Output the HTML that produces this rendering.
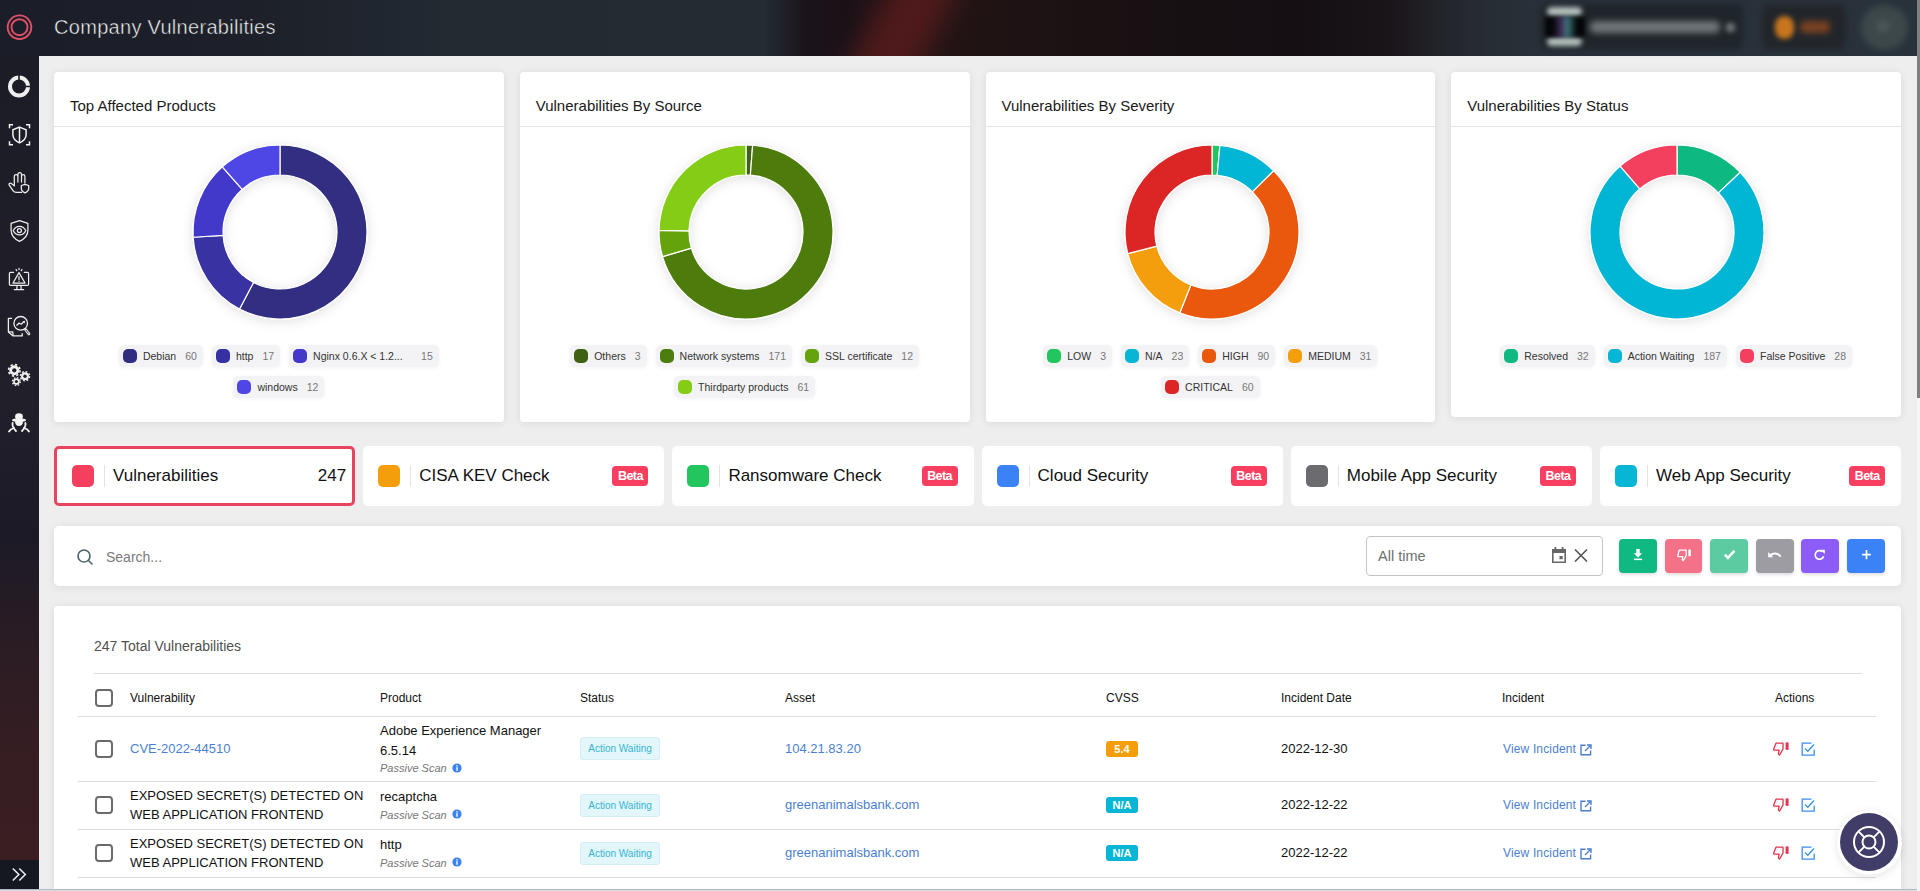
<!DOCTYPE html><html><head><meta charset="utf-8"><title>Company Vulnerabilities</title><style>
*{margin:0;padding:0;box-sizing:border-box}
html,body{width:1920px;height:891px;overflow:hidden;background:#efeeef;font-family:"Liberation Sans",sans-serif;color:#111}
.abs{position:absolute}
#hdr{position:absolute;left:0;top:0;width:1917px;height:56px;overflow:hidden;
 background:linear-gradient(90deg,#1b1d29 0px,#1d2029 250px,#222a32 450px,#232b33 765px,#1b141a 805px,#1a1117 845px,#241315 900px,#1f1314 1000px,#181013 1150px,#150f13 1300px,#1a1519 1390px,#22242a 1440px,#272d34 1490px,#29313a 1550px,#29323a 1920px)}
#streak{position:absolute;left:872px;top:-40px;width:62px;height:140px;background:#4e1a1b;transform:rotate(28deg);filter:blur(13px)}
#sb{position:absolute;left:0;top:56px;width:39px;height:835px;
 background:linear-gradient(180deg,#1c1c27 0px,#201f2a 350px,#1c1a26 480px,#2b1c24 590px,#361e22 700px,#3a1e22 804px)}
#sbb{position:absolute;left:0;top:860px;width:39px;height:29px;background:#161821}
.card{position:absolute;background:#fff;border-radius:4px;box-shadow:0 1px 8px rgba(0,0,0,.085)}
.ctitle{position:absolute;left:16px;top:25px;font-size:15px;color:#1a1a1a;white-space:nowrap}
.cdiv{position:absolute;left:0;right:0;top:54px;height:1px;background:#e5e5e5}
.chip{position:absolute;height:22px;background:#f3f3f5;border-radius:5px;box-shadow:0 1px 3px rgba(0,0,0,.05);font-size:12px;color:#333;white-space:nowrap}
.chip i{position:absolute;left:4px;top:4px;width:14px;height:14px;border-radius:4px}
.chip b{position:absolute;top:4px;font-weight:normal;line-height:14px}
.chip s{position:absolute;top:4px;text-decoration:none;color:#777;line-height:14px}
.tab{position:absolute;top:446px;width:301.2px;height:60px;background:#fff;border-radius:5px}
.tab.act{border:3px solid #e8445f}
.tab i{position:absolute;left:15px;top:19px;width:22px;height:22px;border-radius:5px}
.tab em{position:absolute;left:47px;top:19px;width:1px;height:22px;background:#e3e3e3}
.tab span{position:absolute;left:56px;top:19px;font-size:17px;line-height:22px;color:#111;white-space:nowrap}
.beta{position:absolute;right:16px;top:20px;width:36px;height:20px;border-radius:4px;background:#f83f60;color:#fff;font-size:12.5px;font-weight:bold;letter-spacing:-0.55px;line-height:20px;text-align:center}
.btn{position:absolute;top:539px;width:37.8px;height:34px;border-radius:4px;box-shadow:0 2px 3px rgba(0,0,0,.12)}
.btn svg{position:absolute;left:0;top:0}
.th{position:absolute;top:691px;font-size:12px;line-height:15px;color:#111;white-space:nowrap}
.hl{position:absolute;height:1px;background:#dedede}
.cb{position:absolute;left:95px;width:18px;height:18px;border:2px solid #6b6b6b;border-radius:4px}
.td{position:absolute;font-size:13px;line-height:19px;color:#111;white-space:nowrap}
.lnk{color:#4b7fcf}
.ps{position:absolute;font-size:11px;font-style:italic;color:#777;white-space:nowrap;line-height:13px}
.aw{position:absolute;left:580px;width:80px;height:23px;border-radius:3px;background:#e3f6fa;border:1px solid #d3eef4;color:#35b5d2;font-size:10px;line-height:21px;text-align:center;white-space:nowrap}
.cv{position:absolute;left:1106px;width:32px;height:16px;border-radius:3px;color:#fff;font-size:11px;line-height:16px;text-align:center;font-weight:bold}

.lrow{position:absolute;height:22px;display:flex;justify-content:center;gap:9px}
.lc{display:flex;align-items:center;height:22px;padding:0 6px 0 4px;background:#f3f3f5;border-radius:5px;box-shadow:0 1px 4px rgba(0,0,0,.05);font-size:10.5px;color:#333;white-space:nowrap}
.lc i{width:14px;height:14px;border-radius:5px;margin-right:6px;flex:none}
.lc b{font-weight:normal}
.lc s{text-decoration:none;color:#777;margin-left:9px}
</style></head><body>
<div id="hdr"><div id="streak"></div></div>
<svg class="abs" style="left:0;top:0" width="40" height="56"><circle cx="19.5" cy="27.2" r="11.8" fill="none" stroke="#de5065" stroke-width="1.9"/><circle cx="19.5" cy="27.2" r="8" fill="none" stroke="#de5065" stroke-width="1.9"/></svg>
<div class="abs" style="left:54px;top:15px;font-size:20px;line-height:24px;color:#fafafa;white-space:nowrap;letter-spacing:0.3px;-webkit-text-stroke:0.5px #1c1f2a">Company Vulnerabilities</div>
<div class="abs" style="left:1540px;top:3px;width:203px;height:47px;border-radius:8px;background:#1f262b;filter:blur(3px)"></div>
<div class="abs" style="left:1547px;top:7px;width:35px;height:9px;border-radius:5px;background:#b4c0bc;filter:blur(2.5px)"></div>
<div class="abs" style="left:1547px;top:37px;width:35px;height:9px;border-radius:5px;background:#b4c0bc;filter:blur(2.5px)"></div>
<div class="abs" style="left:1545px;top:17px;width:40px;height:20px;background:linear-gradient(90deg,#050508 20%,#4a3a6a 45%,#3a7a7a 55%,#050508 80%);filter:blur(2px)"></div>
<div class="abs" style="left:1590px;top:21px;width:130px;height:12px;border-radius:5px;background:#6e7478;filter:blur(3px)"></div>
<div class="abs" style="left:1726px;top:23px;width:9px;height:9px;border-radius:3px;background:#6e7478;filter:blur(2.5px)"></div>
<div class="abs" style="left:1762px;top:4px;width:84px;height:46px;border-radius:8px;background:#22262b;filter:blur(3px)"></div>
<div class="abs" style="left:1775px;top:16px;width:19px;height:23px;border-radius:9px;background:#c8761e;filter:blur(2.5px)"></div>
<div class="abs" style="left:1800px;top:21px;width:30px;height:12px;border-radius:5px;background:#7a4222;filter:blur(3px)"></div>
<div class="abs" style="left:1861px;top:5px;width:47px;height:45px;border-radius:50%;background:#3d484b;filter:blur(3px)"></div>
<div class="abs" style="left:1876px;top:20px;width:14px;height:12px;border-radius:50%;background:#4c5759;filter:blur(3px)"></div>
<div id="sb"></div><div id="sbb"></div>
<svg class="abs" style="left:0;top:0" width="39" height="891"><g transform="translate(19,86.5)"><circle r="9" fill="none" stroke="#eee" stroke-width="4"/><path d="M0,-12 V-6 M6,0 H12" stroke="#1c1c27" stroke-width="1.6"/></g><g transform="translate(19.5,134.7)" fill="none" stroke="#f2f2f2" stroke-width="1.5"><path d="M-10,-6.5 V-10 H-6.5 M6.5,-10 H10 V-6.5 M10,6.5 V10 H6.5 M-6.5,10 H-10 V6.5"/><path d="M0,-7.6 L6.6,-5 V0 C6.6,4 3.5,6.5 0,8.2 C-3.5,6.5 -6.6,4 -6.6,0 V-5 Z"/><path d="M0,-7.6 V8.2"/></g><g fill="none" stroke="#eee" stroke-width="1.25" stroke-linejoin="round" stroke-linecap="round"><path d="M14.3,185.6 V176.3 A1.8,1.8 0 0,1 17.9,176.3 V182 V174.4 A1.8,1.8 0 0,1 21.5,174.4 V182 V176.4 A1.7,1.7 0 0,1 24.9,176.4 V183"/><path d="M14.3,185.8 L11.3,183.6 A1.3,1.3 0 0,0 9.4,185.4 L13,190.6 C13.8,191.8 15,192.4 16.5,192.4 H21.6"/><path d="M21.3,185.5 L25,184.3 L28.7,185.5 V188.2 C28.7,190.6 27,192 25,192.8 C23,192 21.3,190.6 21.3,188.2 Z"/></g><g fill="none" stroke="#eee" stroke-width="1.25" stroke-linejoin="round"><path d="M19.5,220.6 L27.9,223.4 V230.2 C27.9,235.4 24,239.2 19.5,241.4 C15,239.2 11.1,235.4 11.1,230.2 V223.4 Z"/><path d="M13.2,230.6 C15.8,224.8 23.2,224.8 25.8,230.6 C23.2,236.4 15.8,236.4 13.2,230.6 Z"/><circle cx="19.4" cy="230.6" r="2"/></g><g fill="none" stroke="#eee" stroke-width="1.25" stroke-linejoin="round" stroke-linecap="round"><path d="M13.6,272.3 H10.6 Q9.4,272.3 9.4,273.5 V284.2 Q9.4,285.4 10.6,285.4 H27.4 Q28.6,285.4 28.6,284.2 V273.5 Q28.6,272.3 27.4,272.3 H24.2"/><path d="M19,272.6 L25,283 H13 Z"/><path d="M19,276.6 V279.4 M19,281 V281.3"/><path d="M17.1,285.6 L16.8,289.4 M20.9,285.6 L21.2,289.4 M14.3,289.5 H23.7"/><path d="M16.1,269.6 L16.7,270.6 M19,268.4 V269.5 M21.9,269.6 L21.3,270.6"/></g><g fill="none" stroke="#eee" stroke-width="1.3" stroke-linejoin="round"><path d="M12.1,318.4 H8.4 V331.9 L13.1,335.9 H22.2 V333.2"/><path d="M8.4,331.9 H12.75 L13.1,335.9"/><circle cx="20.7" cy="323.3" r="6.8"/><path d="M16.5,325.6 L19.2,323.1 L21.2,324.2 L23.6,322"/></g><path d="M25.6,329.6 L28.9,333.9" stroke="#eee" stroke-width="2.8" stroke-linecap="round"/><path d="M26,330.2 L28.5,333.3" stroke="#1c1c27" stroke-width="0.9" stroke-linecap="round"/><path d="M22.4,321.2 L25.2,320.8 L24.6,323.6 Z" fill="#eee"/><g><circle cx="14.3" cy="370.3" r="5.0" fill="#eee"/><circle cx="14.3" cy="370.3" r="5.75" fill="none" stroke="#eee" stroke-width="1.7" stroke-dasharray="2.258 2.258"/><circle cx="14.3" cy="370.3" r="2.1" fill="#1c1b26"/><circle cx="25" cy="376.2" r="3.9" fill="#eee"/><circle cx="25" cy="376.2" r="4.55" fill="none" stroke="#eee" stroke-width="1.5000000000000002" stroke-dasharray="1.787 1.787"/><circle cx="25" cy="376.2" r="1.7" fill="#1c1b26"/><circle cx="16.4" cy="381.6" r="3.3" fill="#eee"/><circle cx="16.4" cy="381.6" r="3.9" fill="none" stroke="#eee" stroke-width="1.4000000000000001" stroke-dasharray="1.532 1.532"/><circle cx="16.4" cy="381.6" r="1.5" fill="#1c1b26"/></g><g fill="#f4f4f4"><ellipse cx="19" cy="416.5" rx="3.9" ry="3.2"/><ellipse cx="19" cy="420.2" rx="7" ry="1.9"/><path d="M15,421.5 H23 C23,424.5 21,426 19,426 C17,426 15,424.5 15,421.5 Z"/></g><g fill="none" stroke="#f4f4f4" stroke-width="1.8" stroke-linecap="round"><path d="M12.6,423 C12,426 13,428 16,431"/><path d="M25.4,423 C26,426 25,428 22,431"/><path d="M9,431.5 C10,429.5 12,428.5 14,428"/><path d="M29,431.5 C28,429.5 26,428.5 24,428"/></g><g transform="translate(19.8,874.5)" fill="none" stroke="#e8e8ee" stroke-width="1.6"><path d="M-7,-6 L-1,0 L-7,6 M-0.5,-6 L5.5,0 L-0.5,6"/></g></svg>
<div class="card" style="left:54px;top:72px;width:449.75px;height:350px"><div class="ctitle">Top Affected Products</div><div class="cdiv"></div></div>
<svg class="abs" style="left:170px;top:122px" width="220" height="220"><defs><filter id="sh54" x="-20%" y="-20%" width="140%" height="140%"><feDropShadow dx="0" dy="2" stdDeviation="6" flood-color="#000" flood-opacity="0.12"/></filter></defs><g filter="url(#sh54)"><path d="M110.00,23.00 A87,87 0 1 1 69.57,187.03 L83.51,160.47 A57,57 0 1 0 110.00,53.00 Z" fill="#312e81" stroke="#ffffff" stroke-width="1.2" stroke-linejoin="round"/>
<path d="M69.57,187.03 A87,87 0 0 1 23.16,115.25 L53.10,113.44 A57,57 0 0 0 83.51,160.47 Z" fill="#3730a3" stroke="#ffffff" stroke-width="1.2" stroke-linejoin="round"/>
<path d="M23.16,115.25 A87,87 0 0 1 52.31,44.88 L72.20,67.33 A57,57 0 0 0 53.10,113.44 Z" fill="#4338ca" stroke="#ffffff" stroke-width="1.2" stroke-linejoin="round"/>
<path d="M52.31,44.88 A87,87 0 0 1 110.00,23.00 L110.00,53.00 A57,57 0 0 0 72.20,67.33 Z" fill="#4f46e5" stroke="#ffffff" stroke-width="1.2" stroke-linejoin="round"/></g></svg>
<div class="lrow" style="left:54px;top:345px;width:449.75px"><div class="lc"><i style="background:#312e81"></i><b>Debian</b><s>60</s></div><div class="lc"><i style="background:#3730a3"></i><b>http</b><s>17</s></div><div class="lc"><i style="background:#4338ca"></i><b style="display:inline-block;width:94px">Nginx 0.6.X &lt; 1.2...</b><s style="margin-left:14px">15</s></div></div>
<div class="lrow" style="left:54px;top:376px;width:449.75px"><div class="lc"><i style="background:#4f46e5"></i><b>windows</b><s>12</s></div></div>
<div class="card" style="left:519.75px;top:72px;width:449.75px;height:350px"><div class="ctitle">Vulnerabilities By Source</div><div class="cdiv"></div></div>
<svg class="abs" style="left:635.75px;top:122px" width="220" height="220"><defs><filter id="sh519" x="-20%" y="-20%" width="140%" height="140%"><feDropShadow dx="0" dy="2" stdDeviation="6" flood-color="#000" flood-opacity="0.12"/></filter></defs><g filter="url(#sh519)"><path d="M110.00,23.00 A87,87 0 0 1 116.63,23.25 L114.35,53.17 A57,57 0 0 0 110.00,53.00 Z" fill="#3f6212" stroke="#ffffff" stroke-width="1.2" stroke-linejoin="round"/>
<path d="M116.63,23.25 A87,87 0 1 1 26.54,134.56 L55.32,126.09 A57,57 0 1 0 114.35,53.17 Z" fill="#4d7c0f" stroke="#ffffff" stroke-width="1.2" stroke-linejoin="round"/>
<path d="M26.54,134.56 A87,87 0 0 1 23.02,108.34 L53.01,108.91 A57,57 0 0 0 55.32,126.09 Z" fill="#65a30d" stroke="#ffffff" stroke-width="1.2" stroke-linejoin="round"/>
<path d="M23.02,108.34 A87,87 0 0 1 110.00,23.00 L110.00,53.00 A57,57 0 0 0 53.01,108.91 Z" fill="#84cc16" stroke="#ffffff" stroke-width="1.2" stroke-linejoin="round"/></g></svg>
<div class="lrow" style="left:519.75px;top:345px;width:449.75px"><div class="lc"><i style="background:#3f6212"></i><b>Others</b><s>3</s></div><div class="lc"><i style="background:#4d7c0f"></i><b>Network systems</b><s>171</s></div><div class="lc"><i style="background:#65a30d"></i><b>SSL certificate</b><s>12</s></div></div>
<div class="lrow" style="left:519.75px;top:376px;width:449.75px"><div class="lc"><i style="background:#84cc16"></i><b>Thirdparty products</b><s>61</s></div></div>
<div class="card" style="left:985.5px;top:72px;width:449.75px;height:350px"><div class="ctitle">Vulnerabilities By Severity</div><div class="cdiv"></div></div>
<svg class="abs" style="left:1101.5px;top:122px" width="220" height="220"><defs><filter id="sh985" x="-20%" y="-20%" width="140%" height="140%"><feDropShadow dx="0" dy="2" stdDeviation="6" flood-color="#000" flood-opacity="0.12"/></filter></defs><g filter="url(#sh985)"><path d="M110.00,23.00 A87,87 0 0 1 117.91,23.36 L115.18,53.24 A57,57 0 0 0 110.00,53.00 Z" fill="#22c55e" stroke="#ffffff" stroke-width="1.2" stroke-linejoin="round"/>
<path d="M117.91,23.36 A87,87 0 0 1 171.75,48.72 L150.46,69.85 A57,57 0 0 0 115.18,53.24 Z" fill="#06b6d4" stroke="#ffffff" stroke-width="1.2" stroke-linejoin="round"/>
<path d="M171.75,48.72 A87,87 0 0 1 77.78,190.81 L88.89,162.95 A57,57 0 0 0 150.46,69.85 Z" fill="#ea580c" stroke="#ffffff" stroke-width="1.2" stroke-linejoin="round"/>
<path d="M77.78,190.81 A87,87 0 0 1 25.71,131.56 L54.78,124.13 A57,57 0 0 0 88.89,162.95 Z" fill="#f59e0b" stroke="#ffffff" stroke-width="1.2" stroke-linejoin="round"/>
<path d="M25.71,131.56 A87,87 0 0 1 110.00,23.00 L110.00,53.00 A57,57 0 0 0 54.78,124.13 Z" fill="#dc2626" stroke="#ffffff" stroke-width="1.2" stroke-linejoin="round"/></g></svg>
<div class="lrow" style="left:985.5px;top:345px;width:449.75px"><div class="lc"><i style="background:#22c55e"></i><b>LOW</b><s>3</s></div><div class="lc"><i style="background:#06b6d4"></i><b>N/A</b><s>23</s></div><div class="lc"><i style="background:#ea580c"></i><b>HIGH</b><s>90</s></div><div class="lc"><i style="background:#f59e0b"></i><b>MEDIUM</b><s>31</s></div></div>
<div class="lrow" style="left:985.5px;top:376px;width:449.75px"><div class="lc"><i style="background:#dc2626"></i><b>CRITICAL</b><s>60</s></div></div>
<div class="card" style="left:1451.25px;top:72px;width:449.75px;height:345px"><div class="ctitle">Vulnerabilities By Status</div><div class="cdiv"></div></div>
<svg class="abs" style="left:1567.25px;top:122px" width="220" height="220"><defs><filter id="sh1451" x="-20%" y="-20%" width="140%" height="140%"><feDropShadow dx="0" dy="2" stdDeviation="6" flood-color="#000" flood-opacity="0.12"/></filter></defs><g filter="url(#sh1451)"><path d="M110.00,23.00 A87,87 0 0 1 173.25,50.27 L151.44,70.86 A57,57 0 0 0 110.00,53.00 Z" fill="#10b981" stroke="#ffffff" stroke-width="1.2" stroke-linejoin="round"/>
<path d="M173.25,50.27 A87,87 0 1 1 53.14,44.15 L72.75,66.86 A57,57 0 1 0 151.44,70.86 Z" fill="#06b6d4" stroke="#ffffff" stroke-width="1.2" stroke-linejoin="round"/>
<path d="M53.14,44.15 A87,87 0 0 1 110.00,23.00 L110.00,53.00 A57,57 0 0 0 72.75,66.86 Z" fill="#f43f5e" stroke="#ffffff" stroke-width="1.2" stroke-linejoin="round"/></g></svg>
<div class="lrow" style="left:1451.25px;top:345px;width:449.75px"><div class="lc"><i style="background:#10b981"></i><b>Resolved</b><s>32</s></div><div class="lc"><i style="background:#06b6d4"></i><b>Action Waiting</b><s>187</s></div><div class="lc"><i style="background:#f43f5e"></i><b>False Positive</b><s>28</s></div></div>
<div class="tab act" style="left:54.0px"><i style="background:#f43f5e;left:15px;top:16px"></i><em style="left:47px;top:16px"></em><span style="left:56px;top:16px">Vulnerabilities</span><span style="left:auto;right:6px;top:16px">247</span></div>
<div class="tab" style="left:363.2px"><i style="background:#f59e0b"></i><em></em><span>CISA KEV Check</span><div class="beta">Beta</div></div>
<div class="tab" style="left:672.4px"><i style="background:#22c55e"></i><em></em><span>Ransomware Check</span><div class="beta">Beta</div></div>
<div class="tab" style="left:981.6px"><i style="background:#3b82f6"></i><em></em><span>Cloud Security</span><div class="beta">Beta</div></div>
<div class="tab" style="left:1290.8px"><i style="background:#6b6b70"></i><em></em><span>Mobile App Security</span><div class="beta">Beta</div></div>
<div class="tab" style="left:1600.0px"><i style="background:#06b6d4"></i><em></em><span>Web App Security</span><div class="beta">Beta</div></div>
<div class="card" style="left:54px;top:526px;width:1847px;height:60px;border-radius:5px"></div>
<svg class="abs" style="left:76px;top:548px" width="18" height="18" fill="none" stroke="#4f6870" stroke-width="1.7"><circle cx="8" cy="8" r="6"/><path d="M12.5,12.5 L16.5,16.5"/></svg>
<div class="abs" style="left:106px;top:549px;font-size:14px;line-height:16px;color:#7a7a7a">Search...</div>
<div class="abs" style="left:1366px;top:536px;width:237px;height:40px;border:1px solid #c4c4c4;border-radius:4px;background:#fff"></div>
<div class="abs" style="left:1378px;top:547.5px;font-size:14.5px;line-height:17px;color:#6f6f6f">All time</div>
<svg class="abs" style="left:1551px;top:546px" width="16" height="18" fill="#666"><path d="M1,3 H15 V17 H1 Z M2.6,7 V15.4 H13.4 V7 Z" fill-rule="evenodd"/><rect x="3.5" y="1" width="1.8" height="3"/><rect x="10.7" y="1" width="1.8" height="3"/><rect x="8.5" y="10" width="3.2" height="3.2"/></svg>
<svg class="abs" style="left:1574px;top:549px" width="14" height="13" stroke="#555" stroke-width="1.6"><path d="M1,0.5 L13,12.5 M13,0.5 L1,12.5"/></svg>
<div class="btn" style="left:1619px;background:#10b981"><svg width="38" height="34"><g fill="#fff"><path d="M17.3,10 H20.7 V14.2 H23.1 L19,18.4 L14.9,14.2 H17.3 Z"/><rect x="14.9" y="19.6" width="8.2" height="1.5"/></g></svg></div>
<div class="btn" style="left:1664.6px;background:#f47288"><svg width="38" height="34"><g fill="none" stroke="#fff" stroke-width="1.3" stroke-linejoin="round"><path d="M14.2,11.2 H21.2 V16.8 L18.2,21.6 C17.5,21.4 17.1,20.8 17.3,20 L17.8,17.6 H13.5 C12.9,17.6 12.6,17.1 12.8,16.5 Z"/></g><rect x="23.3" y="10.6" width="2.6" height="6.6" fill="#fff"/></svg></div>
<div class="btn" style="left:1710.2px;background:#5ccba2"><svg width="38" height="34"><path d="M14.9,15.6 L17.9,18.8 L24.4,11.8" fill="none" stroke="#fff" stroke-width="2.5"/></svg></div>
<div class="btn" style="left:1755.8px;background:#9c9ca2"><svg width="38" height="34"><path d="M12.2,13 L12.2,18.2 L17.2,18.2 Z" fill="#fff"/><path d="M14.4,16.3 C17,13.6 21.8,13.6 24.6,17.6" fill="none" stroke="#fff" stroke-width="2"/></svg></div>
<div class="btn" style="left:1801.4px;background:#8b5cf6"><svg width="38" height="34"><path d="M22.6,17.2 A4.3,4.3 0 1,1 21.2,12.6" fill="none" stroke="#fff" stroke-width="1.7"/><path d="M19.6,10.8 L23.8,10.8 L23.8,15 Z" fill="#fff"/></svg></div>
<div class="btn" style="left:1847px;background:#3b82f6"><svg width="38" height="34"><path d="M19.5,11.1 V20.3 M15.1,15.7 H23.9" stroke="#fff" stroke-width="1.7"/></svg></div>
<div class="card" style="left:54px;top:606px;width:1847px;height:300px"></div>
<div class="abs" style="left:94px;top:638px;font-size:14px;line-height:16px;color:#505050">247 Total Vulnerabilities</div>
<div class="hl" style="left:94px;top:673px;width:1768px"></div>
<div class="cb" style="top:689px"></div>
<div class="th" style="left:130px">Vulnerability</div>
<div class="th" style="left:380px">Product</div>
<div class="th" style="left:580px">Status</div>
<div class="th" style="left:785px">Asset</div>
<div class="th" style="left:1106px">CVSS</div>
<div class="th" style="left:1281px">Incident Date</div>
<div class="th" style="left:1502px">Incident</div>
<div class="th" style="left:1775px">Actions</div>
<div class="hl" style="left:78px;top:716px;width:1798px"></div>
<div class="cb" style="top:739.5px"></div>
<div class="td" style="left:130px;top:739.0px"><span class="lnk">CVE-2022-44510</span></div>
<div class="td" style="left:380px;top:721.0px;line-height:20px">Adobe Experience Manager<br>6.5.14</div>
<div class="ps" style="left:380px;top:762.0px">Passive Scan</div>
<svg class="abs" style="left:452px;top:762.5px" width="10" height="10"><circle cx="5" cy="5" r="4.6" fill="#3b82f6"/><rect x="4.3" y="4.2" width="1.4" height="3.6" fill="#fff"/><rect x="4.3" y="2.2" width="1.4" height="1.3" fill="#fff"/></svg>
<div class="aw" style="top:737.0px">Action Waiting</div>
<div class="td lnk" style="left:785px;top:739px">104.21.83.20</div>
<div class="cv" style="top:740.5px;background:#f59e0b">5.4</div>
<div class="td" style="left:1281px;top:739px">2022-12-30</div>
<div class="td lnk" style="left:1503px;top:740px;font-size:12px;letter-spacing:0.15px">View Incident</div>
<svg class="abs" style="left:1580px;top:743.5px" width="12" height="12" fill="none" stroke="#4b7fcf" stroke-width="1.4"><path d="M5.5,1.2 H1 V10.8 H10.6 V6.5"/><path d="M7,1 H11 V5 M11,1 L5,7"/></svg>
<svg class="abs" style="left:1772px;top:739.5px" width="18" height="18"><g fill="none" stroke="#e0344f" stroke-width="1.3" stroke-linejoin="round"><path d="M4,3.2 H11 V9.2 L7.6,15 C6.8,14.8 6.3,14 6.5,13.2 L7.2,10.2 H2.6 C1.9,10.2 1.5,9.6 1.7,9 Z"/></g><rect x="13.6" y="2.4" width="3" height="7.4" fill="#e0344f"/></svg>
<svg class="abs" style="left:1800px;top:740.5px" width="16" height="16"><path d="M11.5,2.2 H2.2 V14.2 H14.2 V8.5" fill="none" stroke="#3b8ee6" stroke-width="1.3"/><path d="M5,7.5 L7.8,10.2 L14,3.5" fill="none" stroke="#3b8ee6" stroke-width="1.3"/></svg>
<div class="hl" style="left:78px;top:781px;width:1798px"></div>
<div class="cb" style="top:796.0px"></div>
<div class="td" style="left:130px;top:786.0px">EXPOSED SECRET(S) DETECTED ON<br>WEB APPLICATION FRONTEND</div>
<div class="td" style="left:380px;top:786.5px;line-height:20px">recaptcha</div>
<div class="ps" style="left:380px;top:808.5px">Passive Scan</div>
<svg class="abs" style="left:452px;top:809.0px" width="10" height="10"><circle cx="5" cy="5" r="4.6" fill="#3b82f6"/><rect x="4.3" y="4.2" width="1.4" height="3.6" fill="#fff"/><rect x="4.3" y="2.2" width="1.4" height="1.3" fill="#fff"/></svg>
<div class="aw" style="top:793.5px">Action Waiting</div>
<div class="td lnk" style="left:785px;top:795px">greenanimalsbank.com</div>
<div class="cv" style="top:797.0px;background:#06b6d4">N/A</div>
<div class="td" style="left:1281px;top:795px">2022-12-22</div>
<div class="td lnk" style="left:1503px;top:796px;font-size:12px;letter-spacing:0.15px">View Incident</div>
<svg class="abs" style="left:1580px;top:800.0px" width="12" height="12" fill="none" stroke="#4b7fcf" stroke-width="1.4"><path d="M5.5,1.2 H1 V10.8 H10.6 V6.5"/><path d="M7,1 H11 V5 M11,1 L5,7"/></svg>
<svg class="abs" style="left:1772px;top:796.0px" width="18" height="18"><g fill="none" stroke="#e0344f" stroke-width="1.3" stroke-linejoin="round"><path d="M4,3.2 H11 V9.2 L7.6,15 C6.8,14.8 6.3,14 6.5,13.2 L7.2,10.2 H2.6 C1.9,10.2 1.5,9.6 1.7,9 Z"/></g><rect x="13.6" y="2.4" width="3" height="7.4" fill="#e0344f"/></svg>
<svg class="abs" style="left:1800px;top:797.0px" width="16" height="16"><path d="M11.5,2.2 H2.2 V14.2 H14.2 V8.5" fill="none" stroke="#3b8ee6" stroke-width="1.3"/><path d="M5,7.5 L7.8,10.2 L14,3.5" fill="none" stroke="#3b8ee6" stroke-width="1.3"/></svg>
<div class="hl" style="left:78px;top:829px;width:1798px"></div>
<div class="cb" style="top:844.0px"></div>
<div class="td" style="left:130px;top:834.0px">EXPOSED SECRET(S) DETECTED ON<br>WEB APPLICATION FRONTEND</div>
<div class="td" style="left:380px;top:834.5px;line-height:20px">http</div>
<div class="ps" style="left:380px;top:856.5px">Passive Scan</div>
<svg class="abs" style="left:452px;top:857.0px" width="10" height="10"><circle cx="5" cy="5" r="4.6" fill="#3b82f6"/><rect x="4.3" y="4.2" width="1.4" height="3.6" fill="#fff"/><rect x="4.3" y="2.2" width="1.4" height="1.3" fill="#fff"/></svg>
<div class="aw" style="top:841.5px">Action Waiting</div>
<div class="td lnk" style="left:785px;top:843px">greenanimalsbank.com</div>
<div class="cv" style="top:845.0px;background:#06b6d4">N/A</div>
<div class="td" style="left:1281px;top:843px">2022-12-22</div>
<div class="td lnk" style="left:1503px;top:844px;font-size:12px;letter-spacing:0.15px">View Incident</div>
<svg class="abs" style="left:1580px;top:848.0px" width="12" height="12" fill="none" stroke="#4b7fcf" stroke-width="1.4"><path d="M5.5,1.2 H1 V10.8 H10.6 V6.5"/><path d="M7,1 H11 V5 M11,1 L5,7"/></svg>
<svg class="abs" style="left:1772px;top:844.0px" width="18" height="18"><g fill="none" stroke="#e0344f" stroke-width="1.3" stroke-linejoin="round"><path d="M4,3.2 H11 V9.2 L7.6,15 C6.8,14.8 6.3,14 6.5,13.2 L7.2,10.2 H2.6 C1.9,10.2 1.5,9.6 1.7,9 Z"/></g><rect x="13.6" y="2.4" width="3" height="7.4" fill="#e0344f"/></svg>
<svg class="abs" style="left:1800px;top:845.0px" width="16" height="16"><path d="M11.5,2.2 H2.2 V14.2 H14.2 V8.5" fill="none" stroke="#3b8ee6" stroke-width="1.3"/><path d="M5,7.5 L7.8,10.2 L14,3.5" fill="none" stroke="#3b8ee6" stroke-width="1.3"/></svg>
<div class="hl" style="left:78px;top:877px;width:1798px"></div>
<div class="abs" style="left:1836.5px;top:809.5px;width:65px;height:65px;border-radius:50%;background:#fff;box-shadow:0 2px 8px rgba(0,0,0,.10)"></div>
<svg class="abs" style="left:1840px;top:813px" width="58" height="58"><circle cx="29" cy="29" r="29" fill="#403d68"/><g fill="none" stroke="#fff" stroke-width="2"><circle cx="29" cy="29" r="15"/><circle cx="29" cy="29" r="6.5"/><path d="M18.4,18.4 L24.4,24.4 M39.6,18.4 L33.6,24.4 M18.4,39.6 L24.4,33.6 M39.6,39.6 L33.6,33.6"/></g></svg>
<div class="abs" style="left:0;top:889px;width:1920px;height:1px;background:#b3b7c4"></div><div class="abs" style="left:0;top:890px;width:1920px;height:1px;background:#d9dce6"></div>
<div class="abs" style="left:1917px;top:0;width:3px;height:891px;background:#f6f6f6"></div>
<div class="abs" style="left:1917px;top:0;width:3px;height:398px;background:#7f7f7f"></div>
</body></html>
